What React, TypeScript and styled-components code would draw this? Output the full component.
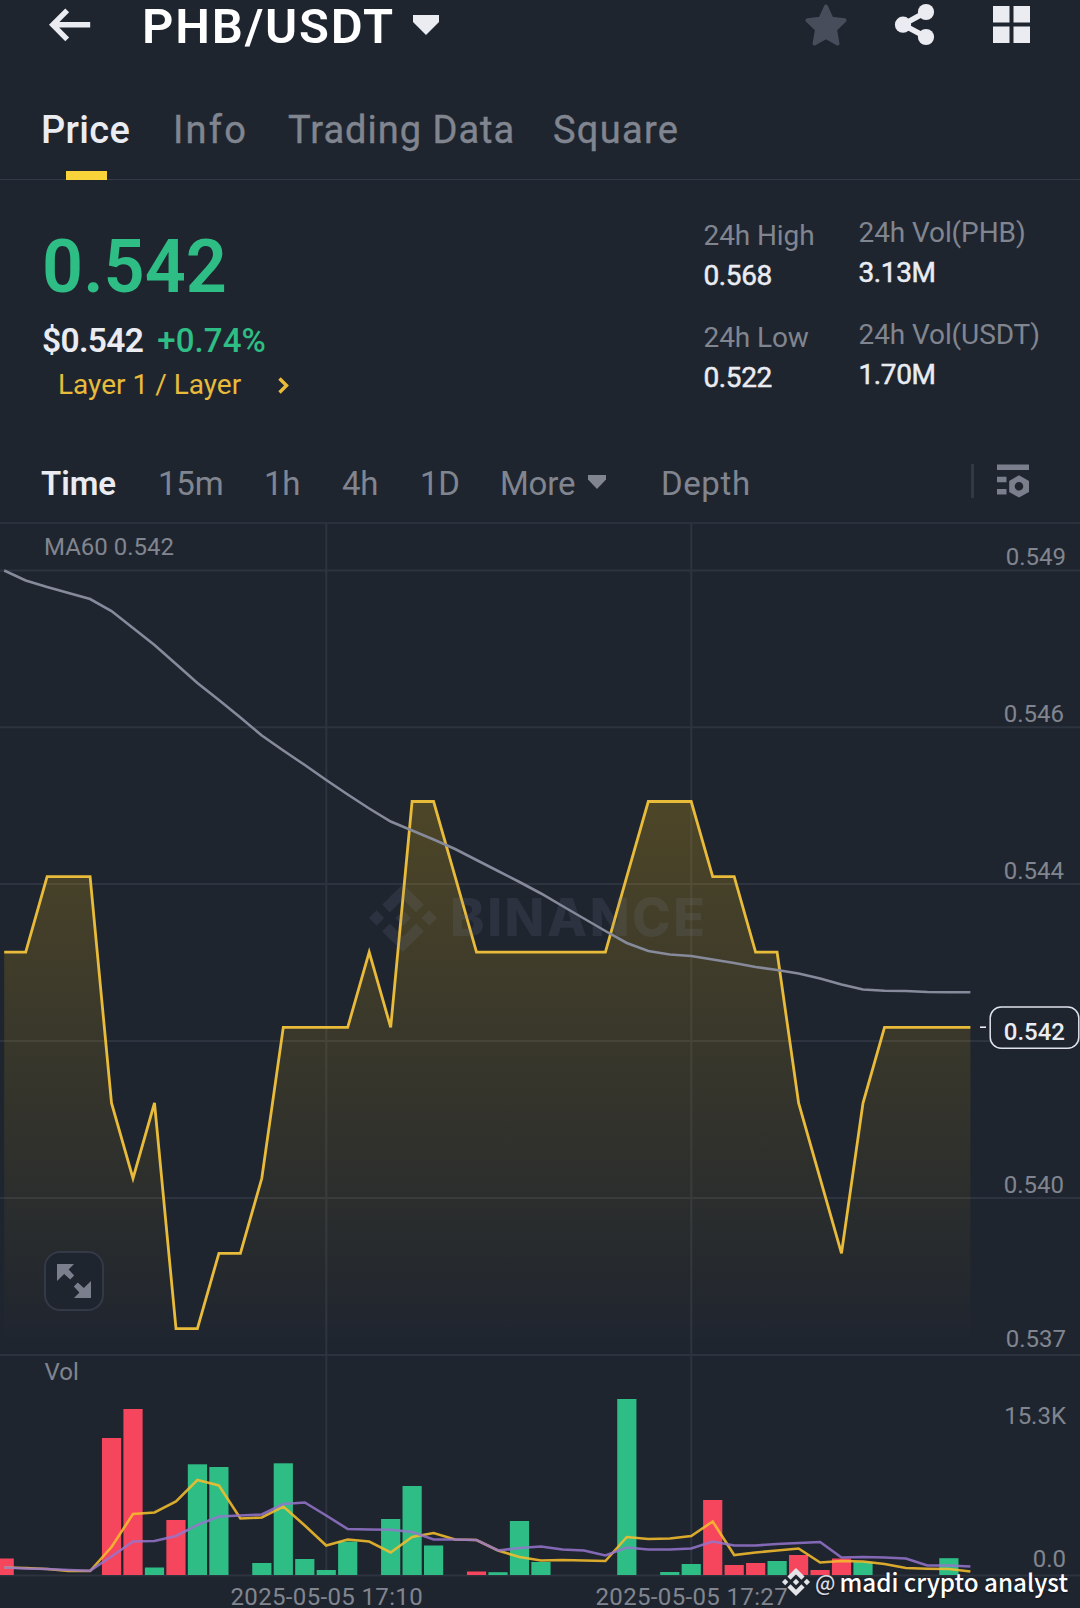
import React from 'react';
import styled, { createGlobalStyle } from 'styled-components';
import { SiBinance } from 'react-icons/si';

const c = {
  bg: '#1f252f',
  line: '#2e343f',
  text: '#eaecf2',
  white: '#ffffff',
  muted: '#81858f',
  dim: '#474d5b',
  green: '#2ebd85',
  red: '#f6465d',
  gold: '#e8bb3a',
  yellow: '#f8d33a',
  purple: '#8a6fb0',
};

const GlobalStyle = createGlobalStyle`
  * { box-sizing: border-box; }
  body {
    margin: 0;
    background: ${c.bg};
    font-family: Roboto, "Liberation Sans", sans-serif;
    color: ${c.text};
  }
  svg { display: block; }
`;

const Screen = styled.main`
  display: flex;
  flex-direction: column;
  width: 1080px;
  height: 1608px;
  overflow: hidden;
  background: ${c.bg};
`;

const Header = styled.header`
  display: flex;
  align-items: flex-start;
  height: 92px;
  padding: 0 50px 0 48px;
`;

const BackIcon = styled.svg`
  width: 44px;
  height: 34px;
  margin-top: 8px;
`;

const Pair = styled.h1`
  margin: 0 18px 0 50px;
  font-size: 49px;
  line-height: 54px;
  font-weight: 600;
  letter-spacing: 1.8px;
  color: ${c.white};
`;

const PairCaret = styled.svg`
  width: 26px;
  height: 20px;
  margin-top: 15px;
`;

const Actions = styled.div`
  display: flex;
  align-items: flex-start;
  margin-left: auto;
  padding-top: 3px;
`;

const ActionIcon = styled.svg<{ $gap?: number }>`
  width: 42px;
  height: 44px;
  margin-left: ${(p) => p.$gap ?? 0}px;
`;

const Tabs = styled.nav`
  display: grid;
  grid-template-columns: 132px 115px 265px auto;
  align-items: start;
  height: 88px;
  padding: 16px 0 0 41px;
  border-bottom: 1px solid #343a47;
`;

const Tab = styled.span<{ $active?: boolean; $track?: number }>`
  position: relative;
  height: 71px;
  font-size: 38px;
  line-height: 44px;
  font-weight: ${(p) => (p.$active ? 500 : 400)};
  letter-spacing: ${(p) => p.$track ?? 1}px;
  color: ${(p) => (p.$active ? c.text : c.muted)};
  -webkit-text-stroke: ${(p) => (p.$active ? 0 : 0.4)}px currentColor;

  &::after {
    content: '';
    display: ${(p) => (p.$active ? 'block' : 'none')};
    position: absolute;
    left: 25px;
    bottom: -1px;
    width: 41px;
    height: 9px;
    background: ${c.yellow};
  }
`;

const Ticker = styled.section`
  display: flex;
  justify-content: space-between;
  height: 260px;
  padding: 33px 0 0 42px;
`;

const PriceBlock = styled.div`
  padding-top: 8px;
`;

const LastPrice = styled.div`
  font-size: 75px;
  line-height: 90px;
  font-weight: 600;
  color: ${c.green};
  transform: scaleX(0.96);
  transform-origin: left;
`;

const Change = styled.div`
  display: flex;
  gap: 14px;
  margin-top: 10px;
  font-size: 33.5px;
  line-height: 40px;
  font-weight: 600;
  letter-spacing: -0.65px;
`;

const Percent = styled.span`
  font-weight: 500;
  font-size: 33px;
  letter-spacing: 0.1px;
  color: ${c.green};
`;

const Sector = styled.div`
  display: flex;
  align-items: center;
  gap: 37px;
  margin-top: 7px;
  padding-left: 16px;
  font-size: 28px;
  line-height: 34px;
  color: ${c.gold};
`;

const Stats = styled.div`
  display: grid;
  grid-template-columns: 155px 221.5px;
`;

const StatColumn = styled.dl<{ $drop?: number }>`
  margin: 0;
  padding-top: ${(p) => p.$drop ?? 0}px;
  font-size: 28px;
  line-height: 40px;
  letter-spacing: -0.1px;
`;

const StatLabel = styled.dt`
  color: ${c.muted};
`;

const StatValue = styled.dd`
  margin: 0 0 22px;
  color: ${c.text};
  letter-spacing: -0.4px;
  -webkit-text-stroke: 0.5px currentColor;
`;

const Intervals = styled.nav`
  display: grid;
  grid-template-columns: 117px 106px 78px 78px 80px 161px 310px 26px auto;
  align-items: center;
  height: 84px;
  padding: 5px 0 0 41px;
  border-bottom: 2px solid #2b303c;
`;

const Interval = styled.span<{ $active?: boolean; $track?: number }>`
  display: flex;
  align-items: center;
  gap: 13px;
  font-size: 33px;
  line-height: 40px;
  font-weight: ${(p) => (p.$active ? 600 : 400)};
  letter-spacing: ${(p) => p.$track ?? -0.2}px;
  color: ${(p) => (p.$active ? c.text : c.muted)};
`;

const Caret = styled.svg`
  margin-bottom: 4px;
`;

const Divider = styled.i`
  align-self: start;
  width: 3px;
  height: 34px;
  margin-top: 19px;
  background: #333844;
`;

const SettingsIcon = styled.svg`
  align-self: start;
  width: 33px;
  height: 34px;
  margin-top: 19px;
`;

const ChartArea = styled.section`
  position: relative;
  height: 1084px;
`;

const ChartSvg = styled.svg`
  width: 1080px;
  height: 1084px;
`;

const ExpandButton = styled.button`
  position: absolute;
  left: 44px;
  top: 727px;
  display: grid;
  place-items: center;
  width: 60px;
  height: 60px;
  padding: 0;
  border: 2.5px solid #333947;
  border-radius: 16px;
  background: ${c.bg};
`;

const Brand = styled.div`
  position: absolute;
  left: 369px;
  top: 360px;
  display: flex;
  align-items: center;
  gap: 13px;
  color: rgba(130, 135, 160, 0.14);
  font-family: Inter, sans-serif;
  font-size: 52px;
  line-height: 68px;
  font-weight: 800;
  letter-spacing: 2.6px;
`;

const Signature = styled.div`
  position: absolute;
  left: 782px;
  top: 1043.5px;
  display: flex;
  align-items: center;
  color: ${c.white};
  font-family: "Noto Sans CJK SC", "Noto Sans", sans-serif;
  font-size: 24.2px;
  line-height: 28px;
  font-weight: 500;
  white-space: nowrap;
  text-shadow: 0 1px 2px rgba(0, 0, 0, 0.5);
`;

const At = styled.span`
  margin: 0 4px 0 5px;
  font-size: 21px;
  color: #d8dae0;
`;

const STEP = 21.47;
const X0 = 4.2;
const FLOOR = 1575;
const x = (i: number) => X0 + i * STEP;

const levels = [801.5, 876.7, 952.2, 1027.3, 1103, 1178.3, 1253.3, 1328.6];
const price = [
  2, 2, 1, 1, 1, 4, 5, 4, 7, 7, 6, 6, 5, 3, 3, 3, 3, 2, 3, 0, 0, 1, 2, 2, 2, 2, 2, 2, 2, 1, 0, 0, 0,
  1, 1, 2, 2, 4, 5, 6, 4, 3, 3, 3, 3, 3,
].map((n) => levels[n]);

const ma60 = [
  570.5, 580.5, 587, 593, 599, 611, 628, 645, 664, 683, 700, 717.5, 735.5, 750.5, 765, 780, 794.5,
  808.5, 821.5, 830.5, 839.5, 849, 860, 871, 882, 893.5, 906, 918.5, 931, 943, 951, 954.5, 956,
  959.5, 963, 967, 970, 973.5, 978.5, 984.5, 989.5, 990.8, 991, 992, 992.2, 992.2,
];

const maFast = [
  1567.5, 1568, 1569, 1571, 1571, 1547, 1514, 1512.5, 1501.5, 1480, 1485.5, 1518.5, 1517.5, 1506.5,
  1525.5, 1545.5, 1539.5, 1541.5, 1552.5, 1537, 1533, 1539.5, 1540, 1550.5, 1557, 1560.5, 1560,
  1560.5, 1561, 1537, 1539, 1538.5, 1536, 1521.5, 1555, 1552.5, 1550.5, 1548.5, 1562.5, 1561,
  1561.5, 1564, 1568, 1568.7, 1569, 1571.5,
];

const maSlow = [
  1567.5, 1568.5, 1569, 1570, 1570.7, 1556.5, 1541.5, 1541, 1536, 1525, 1516.5, 1515.5, 1514.5,
  1504, 1502.5, 1515.5, 1529, 1529.5, 1529.8, 1532, 1539.5, 1539.5, 1540, 1550.5, 1548, 1546.5,
  1549.5, 1550.5, 1555.5, 1547.5, 1549.5, 1549.5, 1548.5, 1541.5, 1545.5, 1545.5, 1544, 1543,
  1542, 1557.5, 1557, 1557.5, 1558.5, 1565.5, 1565.5, 1566.5,
];

const bars: Array<[number, number, 'g' | 'r']> = [
  [0, 1558.5, 'r'], [5, 1438, 'r'], [6, 1409, 'r'], [7, 1567.5, 'g'], [8, 1520, 'r'],
  [9, 1464.3, 'g'], [10, 1467, 'g'], [12, 1563, 'g'], [13, 1463.3, 'g'], [14, 1559, 'g'],
  [15, 1570, 'g'], [16, 1541.5, 'g'], [18, 1519, 'g'], [19, 1486, 'g'], [20, 1545.5, 'g'],
  [22, 1571.5, 'r'], [23, 1572.2, 'g'], [24, 1521, 'g'], [25, 1562, 'g'], [29, 1399, 'g'],
  [31, 1572, 'g'], [32, 1564, 'g'], [33, 1500, 'r'], [34, 1565, 'r'], [35, 1563, 'r'],
  [36, 1561, 'g'], [37, 1555, 'r'], [38, 1570, 'r'], [39, 1558.5, 'r'], [40, 1562, 'g'],
  [44, 1558.2, 'g'],
];

const axis: Array<[string, number, number]> = [
  ['0.549', 1066, 565], ['0.546', 1064, 722], ['0.544', 1064, 879], ['0.540', 1064, 1193],
  ['0.537', 1066, 1347], ['15.3K', 1066, 1423.5], ['0.0', 1066, 1567],
];

const points = (ys: number[]) => ys.map((y, i) => `${x(i).toFixed(1)},${y}`).join(' ');

const Label = styled.text<{ $tone?: string; $weight?: number }>`
  font-size: 24px;
  font-weight: ${(p) => p.$weight ?? 400};
  fill: ${(p) => p.$tone ?? c.muted};
`;

const DateLabel = styled(Label)`
  letter-spacing: 0.35px;
`;

function Chart() {
  return (
    <ChartArea>
      <ChartSvg viewBox="0 524 1080 1084">
        <defs>
          <linearGradient id="fill" gradientUnits="userSpaceOnUse" x1="0" y1="801" x2="0" y2="1345">
            <stop offset="0" stopColor="#f0b90b" stopOpacity="0.22" />
            <stop offset="1" stopColor="#f0b90b" stopOpacity="0" />
          </linearGradient>
        </defs>
        <g stroke={c.line} strokeWidth="2">
          {[570.5, 727.2, 884, 1041, 1198, 1355, 1575.5].map((y) => (
            <line key={y} x1="0" x2="1080" y1={y} y2={y} />
          ))}
          {[326.3, 691.3].map((v) => (
            <line key={v} x1={v} x2={v} y1="524" y2="1575" />
          ))}
        </g>
        <polygon points={`${points(price)} ${x(45)},1345 ${X0},1345`} fill="url(#fill)" />
        <polyline points={points(price)} fill="none" stroke={c.gold} strokeWidth="2.8" />
        <polyline points={points(ma60)} fill="none" stroke="#868a9b" strokeWidth="2.6" />

        {bars.map(([i, top, kind]) => (
          <rect
            key={i}
            x={x(i) - 9.6}
            y={top}
            width="19.2"
            height={FLOOR - top}
            fill={kind === 'g' ? c.green : c.red}
          />
        ))}
        <polyline points={points(maFast)} fill="none" stroke="#f5bd2c" strokeOpacity="0.88" strokeWidth="2.6" />
        <polyline points={points(maSlow)} fill="none" stroke="#9575cd" strokeOpacity="0.85" strokeWidth="2.6" />

        <Label x="44" y="555">MA60 0.542</Label>
        <Label x="44.500" y="1380">Vol</Label>
        {axis.map(([label, right, y]) => (
          <Label key={label} x={right} y={y} textAnchor="end">{label}</Label>
        ))}
        <DateLabel x="230.5" y="1605">2025-05-05 17:10</DateLabel>
        <DateLabel x="595.5" y="1605">2025-05-05 17:27</DateLabel>

        <line x1="980" x2="986" y1="1027.2" y2="1027.2" stroke={c.text} strokeWidth="1.6" />
        <rect x="990.2" y="1007" width="88.6" height="41.3" rx="11" fill={c.bg} stroke="#dfe2ea" strokeWidth="1.5" />
        <Label x="1065" y="1039.7" textAnchor="end" $tone={c.text} $weight={500}>0.542</Label>
      </ChartSvg>

      <Brand>
        <SiBinance size={68} />
        BINANCE
      </Brand>

      <ExpandButton aria-label="Full screen">
        <svg width="34" height="34" viewBox="0 0 34 34" fill="#7b7f8d">
          <path d="M0 0h17l-5.4 5.4 5.6 6-4 4.2-6-5.600L0 17z" />
          <path d="M34 34H17l5.400-5.400-5.600-6 4-4.200 6 5.600L34 17z" />
        </svg>
      </ExpandButton>

      <Signature>
        <SiBinance size={28} color="#e3e5e8" />
        <At>@</At>
        madi crypto analyst
      </Signature>
    </ChartArea>
  );
}

export default function App() {
  return (
    <Screen>
      <GlobalStyle />
      <Header>
        <BackIcon viewBox="48 8 44 34" fill="none" stroke={c.text} strokeWidth="5.4">
          <path d="M90.200 24.800H54M67.200 10.300L52.800 24.800L67.200 39.300" />
        </BackIcon>
        <Pair>PHB/USDT</Pair>
        <PairCaret viewBox="0 0 26 20" fill={c.text}>
          <path d="M0 0H26V7L13 20L0 7Z" />
        </PairCaret>
        <Actions>
          <ActionIcon viewBox="805 3 42 44">
            <path
              d="M826 6.500L831.600 18.800L844.500 20.300L835 29.500L837.500 43.500L826 37L814.500 43.500L817 29.500L807.500 20.300L820.400 18.800Z"
              fill={c.dim}
              stroke={c.dim}
              strokeWidth="4"
              strokeLinejoin="round"
            />
          </ActionIcon>
          <ActionIcon $gap={46} viewBox="893 3 42 44" fill={c.text}>
            <path d="M926 12L903 24.700L926 37" fill="none" stroke={c.text} strokeWidth="5.500" />
            <circle cx="926" cy="12" r="8.100" />
            <circle cx="903" cy="24.700" r="8.100" />
            <circle cx="926" cy="37" r="8.100" />
          </ActionIcon>
          <ActionIcon $gap={53} viewBox="988 3 42 44" fill={c.text}>
            <path d="M993 6h16.500v16.500h-16.500zM1013.500 6h16.500v16.500h-16.500zM993 26.500h16.500v16.500h-16.500zM1013.500 26.500h16.500v16.500h-16.500z" />
          </ActionIcon>
        </Actions>
      </Header>

      <Tabs>
        <Tab $active $track={0.3}>Price</Tab>
        <Tab $track={2.2}>Info</Tab>
        <Tab>Trading Data</Tab>
        <Tab $track={1.3}>Square</Tab>
      </Tabs>

      <Ticker>
        <PriceBlock>
          <LastPrice>0.542</LastPrice>
          <Change>
            <span>$0.542</span>
            <Percent>+0.74%</Percent>
          </Change>
          <Sector>
            Layer 1 / Layer
            <svg width="11" height="17" viewBox="0 0 11 17" fill="none" stroke={c.gold} strokeWidth="3.4">
              <path d="M1.500 1.500L8.500 8.500L1.500 15.500" />
            </svg>
          </Sector>
        </PriceBlock>
        <Stats>
          <StatColumn $drop={3}>
            <StatLabel>24h High</StatLabel>
            <StatValue>0.568</StatValue>
            <StatLabel>24h Low</StatLabel>
            <StatValue>0.522</StatValue>
          </StatColumn>
          <StatColumn>
            <StatLabel>24h Vol(PHB)</StatLabel>
            <StatValue>3.13M</StatValue>
            <StatLabel>24h Vol(USDT)</StatLabel>
            <StatValue>1.70M</StatValue>
          </StatColumn>
        </Stats>
      </Ticker>

      <Intervals>
        <Interval $active $track={-0.1}>Time</Interval>
        <Interval>15m</Interval>
        <Interval>1h</Interval>
        <Interval>4h</Interval>
        <Interval>1D</Interval>
        <Interval>
          More
          <Caret width="18" height="14" viewBox="0 0 18 14" fill={c.muted}>
            <path d="M0 0H18V4.500L9 14L0 4.500Z" />
          </Caret>
        </Interval>
        <Interval $track={0.6}>Depth</Interval>
        <Divider />
        <SettingsIcon viewBox="0 0 33 34" fill="#7b7f8d">
          <path d="M0 0.500H32V6H0zM0 12.800H9.500V18.300H0zM0 25H9.500V30.500H0z" />
          <path
            fillRule="evenodd"
            d="M22 11.200L32 17V28L22 33.500L12.200 28V17ZM22 18A4.300 4.300 0 1 0 22 26.600A4.300 4.300 0 1 0 22 18Z"
          />
        </SettingsIcon>
      </Intervals>

      <Chart />
    </Screen>
  );
}
